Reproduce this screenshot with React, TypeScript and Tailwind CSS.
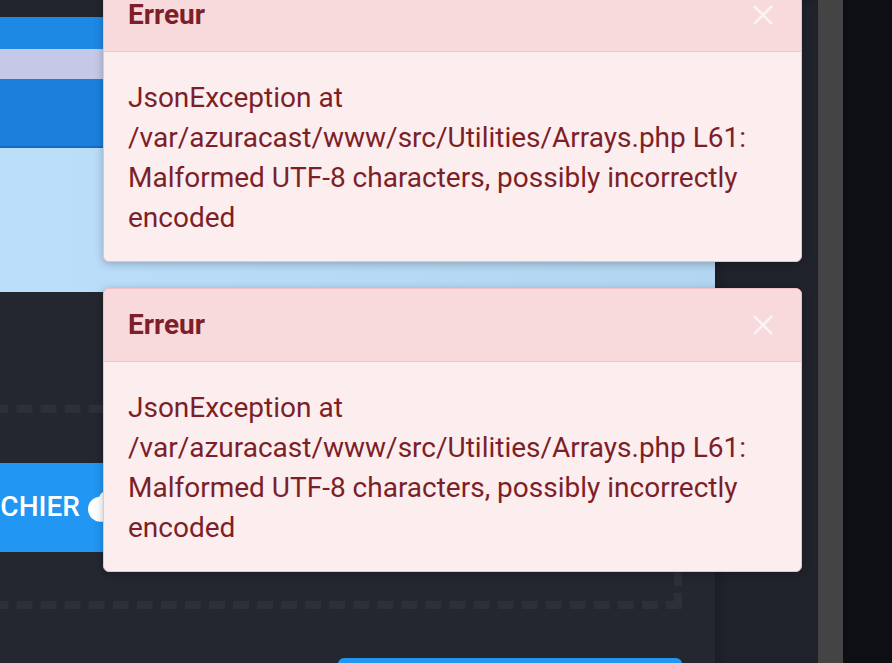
import { MdCloudUpload } from "react-icons/md";

const message =
  "JsonException at /var/azuracast/www/src/Utilities/Arrays.php L61: Malformed UTF-8 characters, possibly incorrectly encoded";

const Toast = ({ title, body }: { title: string; body: string }) => {
  return (
    <div className="overflow-hidden rounded-[6px] border border-[#f1bfc5] bg-[#fcedee] text-[#7d1f28] shadow-[0_2px_8px_rgba(0,0,0,0.25)]">
      <div className="flex h-[73px] items-center justify-between border-b border-[#f5c2c7] bg-[#f8d9dc] pl-[24px] pr-[28px]">
        <span className="text-[28px] font-bold">{title}</span>
        <svg width="20" height="20" viewBox="0 0 20 20" className="text-white opacity-70">
          <path d="M1 1 L19 19 M19 1 L1 19" stroke="currentColor" strokeWidth="2.5" />
        </svg>
      </div>
      <div className="px-[24px] pt-[26px] pb-[23px] text-[28px] leading-[40px]">{body}</div>
    </div>
  );
};

const App = () => {
  return (
    <div className="relative flex h-[663px] w-[892px] overflow-hidden bg-[#23252f] font-['Roboto',sans-serif]">
      <div className="flex w-[715px] shrink-0 flex-col overflow-hidden">
        <div className="h-[17px] shrink-0 bg-[#22242e]" />
        <div className="h-[32px] shrink-0 bg-[#1e88e5]" />
        <div className="h-[30px] shrink-0 bg-[#c5c9e7]" />
        <div className="h-[69px] shrink-0 border-b-2 border-[#1769c4] bg-[#1b80dc]" />
        <div className="h-[144px] shrink-0 bg-gradient-to-r from-[#bbdefb] to-[#b2d6f1]" />
        <div className="shrink-0 bg-[#242630] pt-[113px] pr-[33px] pb-[40px]">
          <div className="-ml-[200px] flex h-[204px] items-center border-8 border-dashed border-[#2d2f3a]">
            <div className="ml-[145px] flex h-[89px] shrink-0 items-center gap-[8px] whitespace-nowrap bg-[#2196f3] px-[24px] text-[28px] font-medium text-white">
              <span>FICHIER</span>
              <MdCloudUpload className="mt-[-4px] h-[50px] w-[50px]" />
            </div>
          </div>
          <div className="mt-[49px] ml-[338px] h-[20px] w-[344px] rounded-t-[6px] bg-[#2196f3]" />
        </div>
      </div>
      <div className="w-[103px] shrink-0 bg-[#21232c] shadow-[inset_6px_0_8px_rgba(0,0,0,0.15)]" />
      <div className="w-[25px] shrink-0 bg-[#444444]" />
      <div className="flex-1 bg-[#0d0f14]" />

      <div className="absolute top-[-22px] left-[103px] flex w-[699px] flex-col gap-[26px]">
        <Toast title="Erreur" body={message} />
        <Toast title="Erreur" body={message} />
      </div>
    </div>
  );
};

export default App;
